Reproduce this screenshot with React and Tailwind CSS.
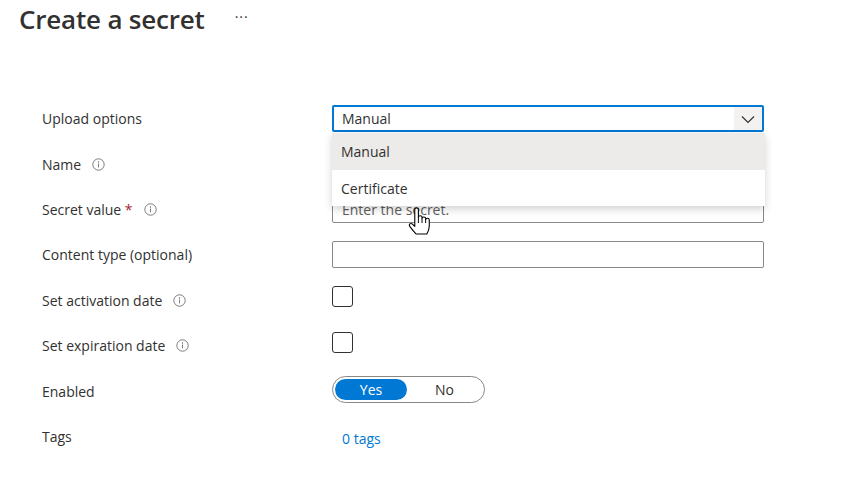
import React from 'react';

const font = { fontFamily: '"Open Sans", "Noto Sans", sans-serif' };

const InfoIcon = () => (
  <svg width="13" height="13" viewBox="0 0 16 16" className="text-[#605e5c]" aria-hidden="true">
    <circle cx="8" cy="8" r="7" fill="none" stroke="currentColor" strokeWidth="1" />
    <circle cx="8" cy="4.9" r="0.8" fill="currentColor" />
    <rect x="7.5" y="6.8" width="1" height="4.8" fill="currentColor" />
  </svg>
);

const Chevron = () => (
  <svg width="16" height="16" viewBox="0 0 16 16" aria-hidden="true">
    <path d="M2 5.5 L8 11.5 L14 5.5" fill="none" stroke="#323130" strokeWidth="1.2" />
  </svg>
);

// windows style pointer hand
const HandCursor = () => (
  <svg width="22" height="30" viewBox="-0.6 -0.6 18.2 22.8" aria-hidden="true">
    <path
      d="M5 1.5Q5 0 6.5 0Q8 0 8 1.5V7.5Q8 6.5 9.5 6.5Q11 6.5 11 7.5V8.5Q11 7.5 12.5 7.5Q14 7.5 14 8.5V9.5Q14 8.5 15.5 8.5Q17 8.5 17 10V15Q17 18 15 21.5H6Q4 19.5 1 15.5Q0 14 1 13.2Q2 12.4 3.5 13.8L5 15.3Z"
      fill="#fff"
      stroke="#000"
      strokeWidth="0.9"
      strokeLinejoin="round"
    />
    <path d="M8 7.5V12.5M11 8.5V12.5M14 9.5V12.5" stroke="#000" strokeWidth="0.8" fill="none" />
  </svg>
);

const Checkbox = () => (
  <div className="-mt-[7px] w-[21px] h-[21px] rounded-[3px] border border-[#323130] bg-white" />
);

const TextInput = ({ placeholder }) => (
  <div className="h-[27px] w-[432px] rounded-[2px] border border-[#8a8886] bg-white px-[9px] flex items-center text-[14px] text-[#605e5c]">
    {placeholder}
  </div>
);

const Row = ({ label, info, required, children }) => (
  <div className="h-[45.4px] flex items-center">
    <div className="w-[290px] flex items-center gap-[8px] text-[14px] text-[#323130]">
      <span>
        {label}
        {required && <span className="text-[#a4262c]"> *</span>}
      </span>
      {info && <span className="ml-[3px] flex items-center"><InfoIcon /></span>}
    </div>
    <div className="flex items-center">{children}</div>
  </div>
);

export default function App() {
  return (
    <div className="relative w-[856px] h-[479px] bg-white overflow-hidden" style={font}>
      <div className="flex items-center pl-[19px] pt-[2px] h-[36px]">
        <h1 className="text-[26px] font-semibold text-[#323130] tracking-[-0.2px]">Create a secret</h1>
        <span className="ml-[30px] text-[14px] text-[#323130] -mt-[6px] tracking-[1px]">···</span>
      </div>

      <div className="pl-[42px] pt-[60px] flex flex-col">
        <Row label="Upload options">
          <div className="relative">
            <div className="h-[27px] w-[432px] rounded-[2px] border-2 border-[#0078d4] bg-white flex items-center justify-between pl-[8px] text-[14px] text-[#323130]">
              <span>Manual</span>
              <span className="h-full w-[28px] bg-[#f3f2f1] flex items-center justify-center">
                <Chevron />
              </span>
            </div>
            <div className="absolute left-0 top-[28px] w-[433px] bg-white shadow-[0_3px_8px_rgba(0,0,0,0.18)] z-10 text-[14px] text-[#323130]">
              <div className="h-[37px] bg-[#edebe9] flex items-center pl-[9px]">Manual</div>
              <div className="h-[36px] flex items-center pl-[9px]">Certificate</div>
            </div>
          </div>
        </Row>
        <Row label="Name" info>
          <TextInput placeholder="" />
        </Row>
        <Row label="Secret value" required info>
          <TextInput placeholder="Enter the secret." />
        </Row>
        <Row label="Content type (optional)">
          <TextInput placeholder="" />
        </Row>
        <Row label="Set activation date" info>
          <Checkbox />
        </Row>
        <Row label="Set expiration date" info>
          <Checkbox />
        </Row>
        <Row label="Enabled">
          <div className="-mt-[3px] h-[27px] w-[153px] rounded-full border border-[#8a8886] bg-white flex items-center p-[2px] text-[14px]">
            <div className="h-[21px] w-[72px] rounded-full bg-[#0078d4] text-white flex items-center justify-center">Yes</div>
            <div className="flex-1 flex items-center justify-center text-[#323130]">No</div>
          </div>
        </Row>
        <Row label="Tags">
          <span className="pl-[10px] pt-[4px] text-[14px] text-[#0078d4]">0 tags</span>
        </Row>
      </div>

      <div className="absolute left-[408px] top-[206px] z-20">
        <HandCursor />
      </div>
    </div>
  );
}
